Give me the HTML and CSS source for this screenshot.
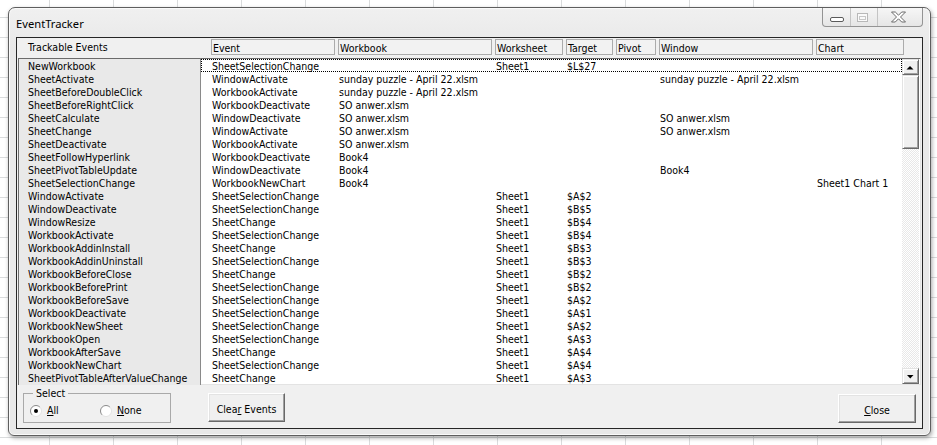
FILE: index.html
```html
<!DOCTYPE html>
<html>
<head>
<meta charset="utf-8">
<title>EventTracker</title>
<link rel="stylesheet" href="styles.css">
</head>
<body>
<div class="window">
  <div class="titlebar">
    <span class="title">EventTracker</span>
    <div class="caption">
      <div class="cbtn cmin"><svg width="27" height="18" viewBox="0 0 27 18"><rect x="7.5" y="9.5" width="13" height="4" rx="1.5" fill="#fff" stroke="#5a5a5a"/></svg></div>
      <div class="cbtn cmax"><svg width="26" height="18" viewBox="0 0 26 18"><rect x="6.5" y="5.5" width="10" height="8" fill="#fafafa" stroke="#b8b8b8"/><rect x="8.5" y="8.5" width="6" height="3" fill="none" stroke="#c8c8c8"/></svg></div>
      <div class="cbtn cclose"><svg width="43" height="18" viewBox="0 0 43 18"><polygon points="13.5,4 17.3,4 20.5,7.2 23.7,4 27.5,4 22.5,9 27.5,14 23.7,14 20.5,10.8 17.3,14 13.5,14 18.5,9" fill="#fff" stroke="#6a6a6a" stroke-linejoin="round"/></svg></div>
    </div>
  </div>
  <div class="client">
    <div class="headrow">
      <div class="lefthead">Trackable Events</div>
      <div class="hcols">
        <div class="hcell">Event</div>
        <div class="hcell">Workbook</div>
        <div class="hcell">Worksheet</div>
        <div class="hcell">Target</div>
        <div class="hcell">Pivot</div>
        <div class="hcell">Window</div>
        <div class="hcell">Chart</div>
      </div>
    </div>
    <div class="lists">
      <div class="leftlist">
        <div class="lrow">NewWorkbook</div>
        <div class="lrow">SheetActivate</div>
        <div class="lrow">SheetBeforeDoubleClick</div>
        <div class="lrow">SheetBeforeRightClick</div>
        <div class="lrow">SheetCalculate</div>
        <div class="lrow">SheetChange</div>
        <div class="lrow">SheetDeactivate</div>
        <div class="lrow">SheetFollowHyperlink</div>
        <div class="lrow">SheetPivotTableUpdate</div>
        <div class="lrow">SheetSelectionChange</div>
        <div class="lrow">WindowActivate</div>
        <div class="lrow">WindowDeactivate</div>
        <div class="lrow">WindowResize</div>
        <div class="lrow">WorkbookActivate</div>
        <div class="lrow">WorkbookAddinInstall</div>
        <div class="lrow">WorkbookAddinUninstall</div>
        <div class="lrow">WorkbookBeforeClose</div>
        <div class="lrow">WorkbookBeforePrint</div>
        <div class="lrow">WorkbookBeforeSave</div>
        <div class="lrow">WorkbookDeactivate</div>
        <div class="lrow">WorkbookNewSheet</div>
        <div class="lrow">WorkbookOpen</div>
        <div class="lrow">WorkbookAfterSave</div>
        <div class="lrow">WorkbookNewChart</div>
        <div class="lrow">SheetPivotTableAfterValueChange</div>
      </div>
      <div class="rightlist">
        <div class="rows">
          <div class="row focus"><span>SheetSelectionChange</span><span></span><span>Sheet1</span><span>$L$27</span><span></span><span></span><span></span></div>
          <div class="row"><span>WindowActivate</span><span>sunday puzzle - April 22.xlsm</span><span></span><span></span><span></span><span>sunday puzzle - April 22.xlsm</span><span></span></div>
          <div class="row"><span>WorkbookActivate</span><span>sunday puzzle - April 22.xlsm</span><span></span><span></span><span></span><span></span><span></span></div>
          <div class="row"><span>WorkbookDeactivate</span><span>SO anwer.xlsm</span><span></span><span></span><span></span><span></span><span></span></div>
          <div class="row"><span>WindowDeactivate</span><span>SO anwer.xlsm</span><span></span><span></span><span></span><span>SO anwer.xlsm</span><span></span></div>
          <div class="row"><span>WindowActivate</span><span>SO anwer.xlsm</span><span></span><span></span><span></span><span>SO anwer.xlsm</span><span></span></div>
          <div class="row"><span>WorkbookActivate</span><span>SO anwer.xlsm</span><span></span><span></span><span></span><span></span><span></span></div>
          <div class="row"><span>WorkbookDeactivate</span><span>Book4</span><span></span><span></span><span></span><span></span><span></span></div>
          <div class="row"><span>WindowDeactivate</span><span>Book4</span><span></span><span></span><span></span><span>Book4</span><span></span></div>
          <div class="row"><span>WorkbookNewChart</span><span>Book4</span><span></span><span></span><span></span><span></span><span>Sheet1 Chart 1</span></div>
          <div class="row"><span>SheetSelectionChange</span><span></span><span>Sheet1</span><span>$A$2</span><span></span><span></span><span></span></div>
          <div class="row"><span>SheetSelectionChange</span><span></span><span>Sheet1</span><span>$B$5</span><span></span><span></span><span></span></div>
          <div class="row"><span>SheetChange</span><span></span><span>Sheet1</span><span>$B$4</span><span></span><span></span><span></span></div>
          <div class="row"><span>SheetSelectionChange</span><span></span><span>Sheet1</span><span>$B$4</span><span></span><span></span><span></span></div>
          <div class="row"><span>SheetChange</span><span></span><span>Sheet1</span><span>$B$3</span><span></span><span></span><span></span></div>
          <div class="row"><span>SheetSelectionChange</span><span></span><span>Sheet1</span><span>$B$3</span><span></span><span></span><span></span></div>
          <div class="row"><span>SheetChange</span><span></span><span>Sheet1</span><span>$B$2</span><span></span><span></span><span></span></div>
          <div class="row"><span>SheetSelectionChange</span><span></span><span>Sheet1</span><span>$B$2</span><span></span><span></span><span></span></div>
          <div class="row"><span>SheetSelectionChange</span><span></span><span>Sheet1</span><span>$A$2</span><span></span><span></span><span></span></div>
          <div class="row"><span>SheetSelectionChange</span><span></span><span>Sheet1</span><span>$A$1</span><span></span><span></span><span></span></div>
          <div class="row"><span>SheetSelectionChange</span><span></span><span>Sheet1</span><span>$A$2</span><span></span><span></span><span></span></div>
          <div class="row"><span>SheetSelectionChange</span><span></span><span>Sheet1</span><span>$A$3</span><span></span><span></span><span></span></div>
          <div class="row"><span>SheetChange</span><span></span><span>Sheet1</span><span>$A$4</span><span></span><span></span><span></span></div>
          <div class="row"><span>SheetSelectionChange</span><span></span><span>Sheet1</span><span>$A$4</span><span></span><span></span><span></span></div>
          <div class="row"><span>SheetChange</span><span></span><span>Sheet1</span><span>$A$3</span><span></span><span></span><span></span></div>
        </div>
        <div class="scrollbar">
          <div class="sbtn"><svg width="15" height="14" viewBox="0 0 15 14"><polygon points="3.5,9.5 10.5,9.5 7,6" fill="#000"/></svg></div>
          <div class="thumb"></div>
          <div class="track"></div>
          <div class="sbtn"><svg width="15" height="14" viewBox="0 0 15 14"><polygon points="4,6 10.5,6 7.25,9.5" fill="#000"/></svg></div>
        </div>
      </div>
    </div>
    <div class="bottom">
      <fieldset class="group">
        <legend>Select</legend>
        <label class="radio first">
          <svg width="12" height="12" viewBox="0 0 12 12"><circle cx="6" cy="6" r="5.5" fill="#fff"/><path d="M2.1 9.9 A5.5 5.5 0 0 1 9.9 2.1" stroke="#8a8a8a" fill="none"/><path d="M9.9 2.1 A5.5 5.5 0 0 1 2.1 9.9" stroke="#e2e2e2" fill="none"/><circle cx="6" cy="6" r="2" fill="#000"/></svg>
          <span><u>A</u>ll</span>
        </label>
        <label class="radio">
          <svg width="12" height="12" viewBox="0 0 12 12"><circle cx="6" cy="6" r="5.5" fill="#fff"/><path d="M2.1 9.9 A5.5 5.5 0 0 1 9.9 2.1" stroke="#8a8a8a" fill="none"/><path d="M9.9 2.1 A5.5 5.5 0 0 1 2.1 9.9" stroke="#e2e2e2" fill="none"/></svg>
          <span><u>N</u>one</span>
        </label>
      </fieldset>
      <button class="btn btn-clear">Clea<u>r</u> Events</button>
      <button class="btn btn-close"><u>C</u>lose</button>
    </div>
  </div>
</div>
</body>
</html>
```
FILE: styles.css
```css
html, body {
  margin: 0;
  padding: 0;
}
body {
  width: 937px;
  height: 445px;
  overflow: hidden;
  background-color: #ffffff;
  background-image:
    linear-gradient(to right, #dadcdd 1px, transparent 1px),
    linear-gradient(to bottom, #dadcdd 1px, transparent 1px);
  background-size: 64px 20px;
  background-position: 49px 17px;
  font-family: "DejaVu Sans Condensed", "DejaVu Sans", sans-serif;
  font-stretch: condensed;
  font-size: 10.5px;
  color: #000;
}
.window {
  margin: 7px 0 0 8px;
  width: 923px;
  height: 429px;
  box-sizing: border-box;
  border: 1px solid #5e5e5e;
  border-radius: 7px 7px 6px 6px;
  background: linear-gradient(#f0f0f0, #e8e8e8 40px, #e8e8e8);
  padding: 0 7px 6px 7px;
  display: flex;
  flex-direction: column;
  box-shadow: inset 0 0 0 1px #fafafa, 1px 2px 4px rgba(0,0,0,0.35);
}
.titlebar {
  height: 29px;
  display: flex;
  align-items: flex-start;
  flex-shrink: 0;
}
.title {
  font-family: "Noto Sans", sans-serif;
  font-stretch: normal;
  font-size: 11.2px;
  line-height: 16px;
  margin-top: 8px;
}
.caption {
  margin-left: auto;
  display: flex;
  height: 19px;
  box-sizing: border-box;
  border: 1px solid #949494;
  border-top: none;
  border-radius: 0 0 4px 4px;
  background: linear-gradient(#f6f6f6, #e6e6e6);
  overflow: hidden;
}
.cbtn {
  height: 18px;
  box-sizing: border-box;
}
.cbtn svg { display: block; }
.cmin { width: 28px; border-right: 1px solid #c4c4c4; }
.cmax { width: 27px; border-right: 1px solid #c4c4c4; }
.cclose { width: 44px; }

.client {
  flex: 1;
  border: 1px solid #262626;
  background: #f0f0f0;
  display: flex;
  flex-direction: column;
}
.headrow {
  height: 20px;
  display: flex;
  flex-shrink: 0;
}
.lefthead {
  width: 184px;
  box-sizing: border-box;
  padding-left: 11px;
  padding-top: 1px;
  line-height: 17px;
}
.hcols {
  display: grid;
  grid-template-columns: 124px 154px 68px 47px 40px 154px 88px;
  column-gap: 3px;
  margin-left: 10px;
  margin-top: 1px;
  height: 16px;
}
.hcell {
  border: 1px solid #ababab;
  box-sizing: border-box;
  height: 16px;
  line-height: 14px;
  padding-left: 1px;
  padding-top: 1px;
  background: #f2f2f2;
  white-space: nowrap;
}
.lists {
  display: flex;
  height: 327px;
  margin-left: 1px;
  flex-shrink: 0;
}
.leftlist {
  width: 183px;
  box-sizing: border-box;
  border-top: 1px solid #6b6b6b;
  border-left: 1px solid #6b6b6b;
  border-right: 1px solid #8a8a8a;
  background: #e9e9e9;
  padding-left: 9px;
  overflow: hidden;
}
.lrow {
  height: 13px;
  box-sizing: border-box;
  padding-top: 1px;
  line-height: 13px;
  white-space: nowrap;
}
.rightlist {
  width: 720px;
  box-sizing: border-box;
  display: flex;
  border-top: 1px solid #6b6b6b;
  border-right: 1px solid #e3e3e3;
  border-bottom: 1px solid #e3e3e3;
  background: #fff;
  overflow: hidden;
}
.rows {
  width: 701px;
  flex-shrink: 0;
}
.row {
  display: grid;
  grid-template-columns: 124px 154px 68px 47px 40px 154px 88px;
  grid-template-rows: 13px;
  column-gap: 3px;
  padding: 1px 0 0 10px;
  height: 13px;
  box-sizing: border-box;
  line-height: 13px;
  white-space: nowrap;
}
.row span {
  padding-left: 1px;
}
.row.focus {
  outline: 1px dotted #000;
  outline-offset: -1px;
}
.scrollbar {
  width: 17px;
  height: 325px;
  display: flex;
  flex-direction: column;
  flex-shrink: 0;
}
.sbtn, .thumb {
  box-sizing: border-box;
  background: #f0f0f0;
  border: 1px solid;
  border-color: #e3e3e3 #696969 #696969 #e3e3e3;
  box-shadow: inset 1px 1px #fff, inset -1px -1px #a0a0a0;
}
.sbtn { height: 16px; }
.sbtn svg { display: block; }
.thumb { height: 74px; }
.track {
  flex: 1;
  background-color: #f4f4f4;
  background-image: repeating-conic-gradient(#ffffff 0 25%, #e8e8e8 0 50%);
  background-size: 2px 2px;
}
.bottom {
  flex: 1;
  display: flex;
  align-items: flex-start;
}
.group {
  margin: 2px 0 0 6px;
  width: 148px;
  box-sizing: border-box;
  min-width: 0;
  border: 1px solid #a9a9a9;
  padding: 4px 0 5px 6px;
  display: flex;
}
.group legend {
  margin-left: 3px;
  padding: 0 3px;
  line-height: 13px;
}
.radio {
  display: flex;
  align-items: center;
  gap: 5px;
  height: 13px;
  line-height: 13px;
}
.radio svg { display: block; flex-shrink: 0; }
.radio.first { width: 70px; }
.btn {
  font: inherit;
  font-stretch: condensed;
  color: #000;
  height: 29px;
  box-sizing: border-box;
  background: #f0f0f0;
  border: 1px solid;
  border-color: #ffffff #696969 #696969 #ffffff;
  box-shadow: inset -1px -1px #a0a0a0, inset 1px 1px #e3e3e3;
  padding: 2px 0 0 0;
  margin-top: 8px;
}
.btn-clear {
  width: 77px;
  margin-left: 37px;
}
.btn-close {
  width: 78px;
  margin-left: auto;
  margin-right: 6px;
  margin-top: 9px;
}
```
